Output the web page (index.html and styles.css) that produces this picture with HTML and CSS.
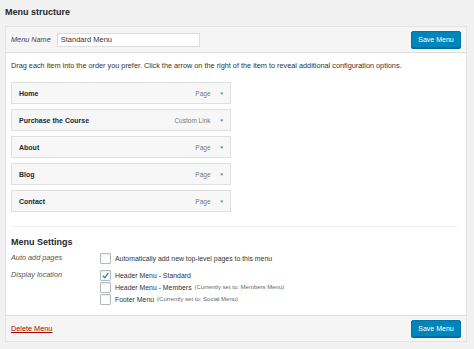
FILE: index.html
```html
<!DOCTYPE html>
<html lang="en">
<head>
  <meta charset="UTF-8">
  <title>Menu structure</title>
  <link rel="stylesheet" href="styles.css">
</head>
<body>

  <h2 class="page-title">Menu structure</h2>

  <div class="menu-panel">
    <!-- Kopfzeile -->
    <div class="panel-header">
      <label class="menu-name">
        <span class="field-label">Menu Name</span>
        <input type="text" class="name-input" value="Standard Menu">
      </label>
      <button class="save-btn">Save Menu</button>
    </div>

    <div class="panel-body">
      <p class="hint">Drag each item into the order you prefer. Click the arrow on the right of the item to reveal additional configuration options.</p>

      <ul class="menu-items">
        <li class="menu-item"><span class="item-title">Home</span><span class="item-type">Page</span><span class="arrow">&#9660;</span></li>
        <li class="menu-item"><span class="item-title">Purchase the Course</span><span class="item-type">Custom Link</span><span class="arrow">&#9660;</span></li>
        <li class="menu-item"><span class="item-title">About</span><span class="item-type">Page</span><span class="arrow">&#9660;</span></li>
        <li class="menu-item"><span class="item-title">Blog</span><span class="item-type">Page</span><span class="arrow">&#9660;</span></li>
        <li class="menu-item"><span class="item-title">Contact</span><span class="item-type">Page</span><span class="arrow">&#9660;</span></li>
      </ul>

      <div class="settings">
        <h3>Menu Settings</h3>
        <div class="setting-row">
          <span class="field-label setting-label">Auto add pages</span>
          <div class="options">
            <label class="option"><span class="checkbox"></span>Automatically add new top-level pages to this menu</label>
          </div>
        </div>
        <div class="setting-row">
          <span class="field-label setting-label">Display location</span>
          <div class="options">
            <label class="option"><span class="checkbox checked"><svg viewBox="0 0 10 10" width="9" height="9"><path d="M2 5.2 L4.2 7.4 L8.2 2.4" fill="none" stroke="#1e8cbe" stroke-width="1.5"/></svg></span>Header Menu - Standard</label>
            <label class="option"><span class="checkbox"></span>Header Menu - Members <small>(Currently set to: Members Menu)</small></label>
            <label class="option"><span class="checkbox"></span>Footer Menu <small>(Currently set to: Social Menu)</small></label>
          </div>
        </div>
      </div>
    </div>

    <!-- Fußzeile -->
    <div class="panel-footer">
      <a href="#" class="delete-link">Delete Menu</a>
      <button class="save-btn">Save Menu</button>
    </div>
  </div>

</body>
</html>
```

FILE: styles.css
```css
body {
  margin: 0;
  padding: 0 7px 0 5px;
  background-color: #f1f1f1;
  color: #23282d;
  font-family: "Liberation Sans", Arial, sans-serif;
  font-size: 7.3px;
}

.page-title {
  margin: 0;
  height: 26px;
  line-height: 24px;
  font-size: 9px;
  font-weight: bold;
}

.menu-panel {
  background-color: #fff;
  border: 1px solid #e2e4e7;
  box-shadow: 0 1px 1px rgba(0,0,0,0.04);
}

.panel-header,
.panel-footer {
  display: flex;
  justify-content: space-between;
  align-items: center;
  height: 25px;
  padding: 0 5px;
  background-color: #f5f5f5;
}

.panel-header {
  border-bottom: 1px solid #dedede;
}

.panel-footer {
  border-top: 1px solid #dedede;
}

.menu-name {
  display: flex;
  align-items: center;
  gap: 6px;
}

.field-label {
  font-style: italic;
  color: #444;
}

.name-input {
  width: 143px;
  height: 14px;
  box-sizing: border-box;
  border: 1px solid #ddd;
  padding: 0 3px;
  font-family: inherit;
  font-size: 7.5px;
  color: #32373c;
  background: #fff;
}

.save-btn {
  width: 50px;
  height: 17px;
  padding: 0;
  background-color: #0085ba;
  border: 1px solid #0073aa;
  border-radius: 2px;
  color: #fff;
  font-family: inherit;
  font-size: 7px;
  box-shadow: 0 1px 0 #006799;
  cursor: pointer;
}

.panel-body {
  padding: 8px 9px 0 5px;
}

.hint {
  margin: 0 0 12px;
  line-height: 9px;
  color: #333;
}

.menu-items {
  list-style: none;
  margin: 0;
  padding: 0;
  width: 220px;
  display: flex;
  flex-direction: column;
  gap: 5px;
}

.menu-item {
  display: flex;
  align-items: center;
  height: 20px;
  padding: 0 6px 0 7px;
  background-color: #f7f7f7;
  border: 1px solid #e0e0e0;
  font-size: 7px;
}

.item-title {
  flex: 1;
  font-weight: bold;
  color: #23282d;
}

.item-type {
  color: #777;
  font-size: 6.5px;
}

.arrow {
  margin-left: 9px;
  font-size: 4.5px;
  color: #777;
}

.settings {
  margin-top: 14px;
  border-top: 1px solid #eee;
  padding-top: 7px;
  padding-bottom: 5px;
}

.settings h3 {
  margin: 0 0 2px;
  font-size: 9px;
  font-weight: 600;
  line-height: 16px;
}

.setting-row {
  display: flex;
  margin-bottom: 5px;
}

.setting-label {
  width: 89px;
  line-height: 12px;
  color: #555;
}

.options {
  display: flex;
  flex-direction: column;
}

.option {
  display: flex;
  align-items: center;
  height: 12px;
  font-size: 6.9px;
  color: #333;
}

.option small {
  font-size: 6px;
  color: #666;
  margin-left: 3px;
}

.checkbox {
  display: inline-flex;
  align-items: center;
  justify-content: center;
  width: 9px;
  height: 9px;
  margin-right: 4px;
  border: 1px solid #b4b9be;
  border-radius: 1px;
  background: #fff;
  box-shadow: inset 0 1px 2px rgba(0,0,0,0.08);
}

.delete-link {
  color: #a00;
  font-size: 7.3px;
  text-decoration: underline;
}
```
